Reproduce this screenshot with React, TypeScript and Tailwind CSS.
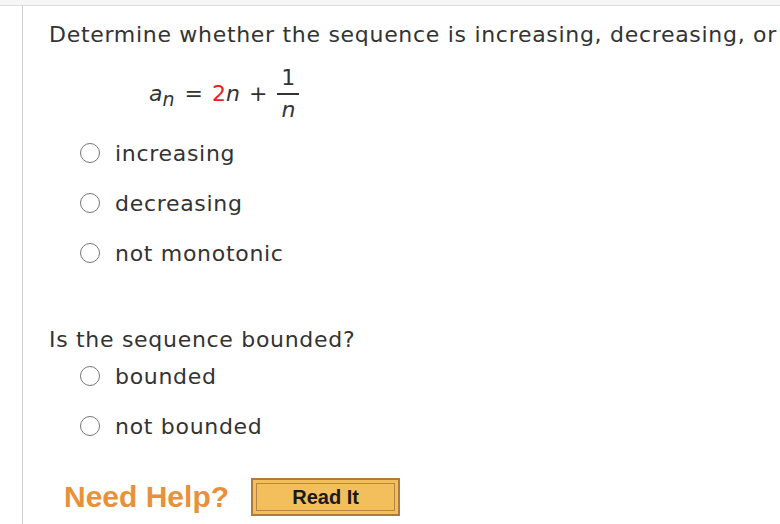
import React from "react";

function Radio({ label }: { label: string }) {
  return (
    <div className="flex items-center h-[50px]">
      <span className="w-[20px] h-[20px] rounded-full border-[1.5px] border-[#767676] bg-white ml-[57px] mr-[15px]" />
      <span>{label}</span>
    </div>
  );
}

export default function App() {
  return (
    <div
      className="w-[780px] h-[524px] bg-white overflow-hidden text-[#333] text-[22px] tracking-[0.7px]"
      style={{ fontFamily: '"DejaVu Sans", Verdana, sans-serif' }}
    >
      <div className="h-[6px] bg-[#f6f6f6] border-b border-[#dcdcdc]" />
      <div className="flex h-[518px]">
        <div className="w-[23px] border-r border-[#cfcfcf]" />
        <div className="flex-1 whitespace-nowrap">
          <div className="pl-[26px] pt-[14px] leading-[30px]">
            Determine whether the sequence is increasing, decreasing, or
          </div>
          <div className="flex items-center pl-[126px] h-[60px] mt-[13px] tracking-normal">
            <span className="italic">a</span>
            <span className="italic text-[19px] relative top-[6px]">n</span>
            <span className="ml-[10px]">=</span>
            <span className="ml-[9px] text-[#e8231c]">2</span>
            <span className="italic">n</span>
            <span className="ml-[9px]">+</span>
            <span className="ml-[10px] inline-flex flex-col items-center leading-[26px] relative top-[1px]">
              <span className="px-[2px]">1</span>
              <span className="h-[1.5px] w-[22px] bg-[#333] my-[2px]" />
              <span className="italic">n</span>
            </span>
          </div>
          <div className="mt-[5px]">
            <Radio label="increasing" />
            <Radio label="decreasing" />
            <Radio label="not monotonic" />
          </div>
          <div className="pl-[26px] mt-[47px] leading-[30px]">Is the sequence bounded?</div>
          <div className="-mt-[4px]">
            <Radio label="bounded" />
            <Radio label="not bounded" />
          </div>
          <div className="flex items-center mt-[23px] pl-[41px] tracking-normal">
            <span
              className="text-[30px] font-bold text-[#e9913a]"
              style={{ fontFamily: '"Liberation Sans", Arial, sans-serif' }}
            >
              Need Help?
            </span>
            <button
              className="ml-[22px] w-[149px] h-[38px] border-2 border-[#b27a3a] bg-[#f3be5c] p-[3px]"
            >
              <span
                className="flex items-center justify-center h-full border border-[#b48642] text-[20px] font-bold text-[#1a1a1a]"
                style={{ fontFamily: '"Liberation Sans", Arial, sans-serif' }}
              >
                Read It
              </span>
            </button>
          </div>
        </div>
      </div>
    </div>
  );
}
